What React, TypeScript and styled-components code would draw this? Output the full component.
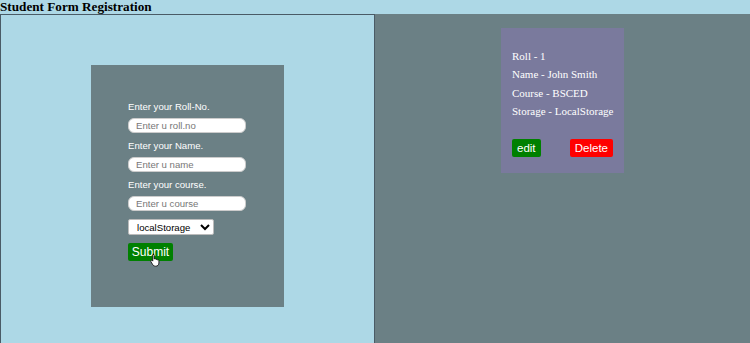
import React from "react";
import styled, { createGlobalStyle } from "styled-components";

const Global = createGlobalStyle`
  html, body { margin: 0; padding: 0; background: #add8e6; overflow: hidden; }
  body { font-family: "Liberation Serif", "Times New Roman", serif; }
`;

const Title = styled.h3`
  margin: 0;
  font-size: 13.2px;
  line-height: 14px;
  height: 14px;
  font-weight: bold;
  color: #000;
  font-family: "Liberation Serif", serif;
`;

const Columns = styled.div`
  display: grid;
  grid-template-columns: 375px 375px;
  height: 329px;
`;

const LeftPanel = styled.div`
  border: 1px solid #4a5b66;
  border-bottom: none;
  background: #add8e6;
  display: flex;
  justify-content: center;
  align-items: flex-start;
  padding-top: 50px;
  box-sizing: border-box;
`;

const RightPanel = styled.div`
  background: #6b8085;
  display: flex;
  justify-content: center;
  align-items: flex-start;
  padding-top: 14px;
  box-sizing: border-box;
`;

const FormBox = styled.form`
  width: 193px;
  height: 242px;
  background: #6b8085;
  box-sizing: border-box;
  padding: 36px 0 0 37px;
  display: flex;
  flex-direction: column;
  align-items: flex-start;
  font-family: "Liberation Sans", Arial, sans-serif;
`;

const Label = styled.label`
  color: #fff;
  font-size: 9.6px;
  line-height: 11px;
  margin-bottom: 6px;
`;

const Input = styled.input`
  width: 118px;
  height: 15px;
  box-sizing: border-box;
  border: 1px solid #ccc;
  border-radius: 6px;
  background: #fff;
  font-family: "Liberation Sans", Arial, sans-serif;
  font-size: 9.6px;
  padding: 0 7px;
  margin: 0 0 7px 0;
  outline: none;
  &::placeholder { color: #777; }
`;

const Select = styled.select`
  width: 86px;
  height: 16px;
  box-sizing: border-box;
  border: 1px solid #bbb;
  border-radius: 2px;
  background: #fff;
  font-family: "Liberation Sans", Arial, sans-serif;
  font-size: 9.6px;
  padding: 0 0 0 4px;
  margin: 1px 0 8px 0;
  color: #000;
`;

const Btn = styled.button<{ $bg: string }>`
  background: ${p => p.$bg};
  color: #fff;
  border: none;
  border-radius: 2px;
  font-family: "Liberation Sans", Arial, sans-serif;
  font-size: 11.5px;
  height: 18px;
  padding: 0 5px;
  line-height: 18px;
  cursor: pointer;
`;

const SubmitBtn = styled(Btn)`
  font-size: 12px;
  width: 45px;
  padding: 0;
  position: relative;
`;

const Cursor = styled.svg`
  position: absolute;
  left: 22px;
  top: 10px;
  width: 11px;
  height: 14px;
`;

const Card = styled.div`
  width: 123px;
  height: 145px;
  background: #7a7a9d;
  box-sizing: border-box;
  padding: 19px 11px 0 11px;
  color: #fff;
  font-family: "Liberation Serif", "Times New Roman", serif;
  font-size: 11px;
`;

const Line = styled.p`
  margin: 0;
  line-height: 18.4px;
  white-space: nowrap;
`;

const Actions = styled.div`
  display: flex;
  justify-content: space-between;
  margin-top: 18px;
  width: 101px;
`;

export default function App() {
  return (
    <>
      <Global />
      <Title>Student Form Registration</Title>
      <Columns>
        <LeftPanel>
          <FormBox onSubmit={e => e.preventDefault()}>
            <Label>Enter your Roll-No.</Label>
            <Input placeholder="Enter u roll.no" />
            <Label>Enter your Name.</Label>
            <Input placeholder="Enter u name" />
            <Label>Enter your course.</Label>
            <Input placeholder="Enter u course" />
            <Select defaultValue="localStorage">
              <option value="localStorage">localStorage</option>
              <option value="sessionStorage">sessionStorage</option>
            </Select>
            <SubmitBtn $bg="#008000" type="submit">
              Submit
              <Cursor viewBox="0 0 11 14">
                <path
                  d="M3 1.2c.7 0 1.2.5 1.2 1.2V6l.4-.2c.6-.2 1.2.1 1.4.6.5-.3 1.2-.1 1.5.4.5-.2 1.2.1 1.4.6V10c0 1.8-1.3 3.2-3.1 3.2H5.2c-1 0-1.8-.5-2.3-1.3L.9 8.6c-.3-.5-.1-1.1.4-1.3.4-.2.9 0 1.2.3l.3.5V2.4c0-.7.5-1.2 1.2-1.2z"
                  fill="#fff"
                  stroke="#000"
                  strokeWidth="0.8"
                />
              </Cursor>
            </SubmitBtn>
          </FormBox>
        </LeftPanel>
        <RightPanel>
          <Card>
            <Line>Roll - 1</Line>
            <Line>Name - John Smith</Line>
            <Line>Course - BSCED</Line>
            <Line>Storage - LocalStorage</Line>
            <Actions>
              <Btn $bg="#008000">edit</Btn>
              <Btn $bg="#ff0000">Delete</Btn>
            </Actions>
          </Card>
        </RightPanel>
      </Columns>
    </>
  );
}
